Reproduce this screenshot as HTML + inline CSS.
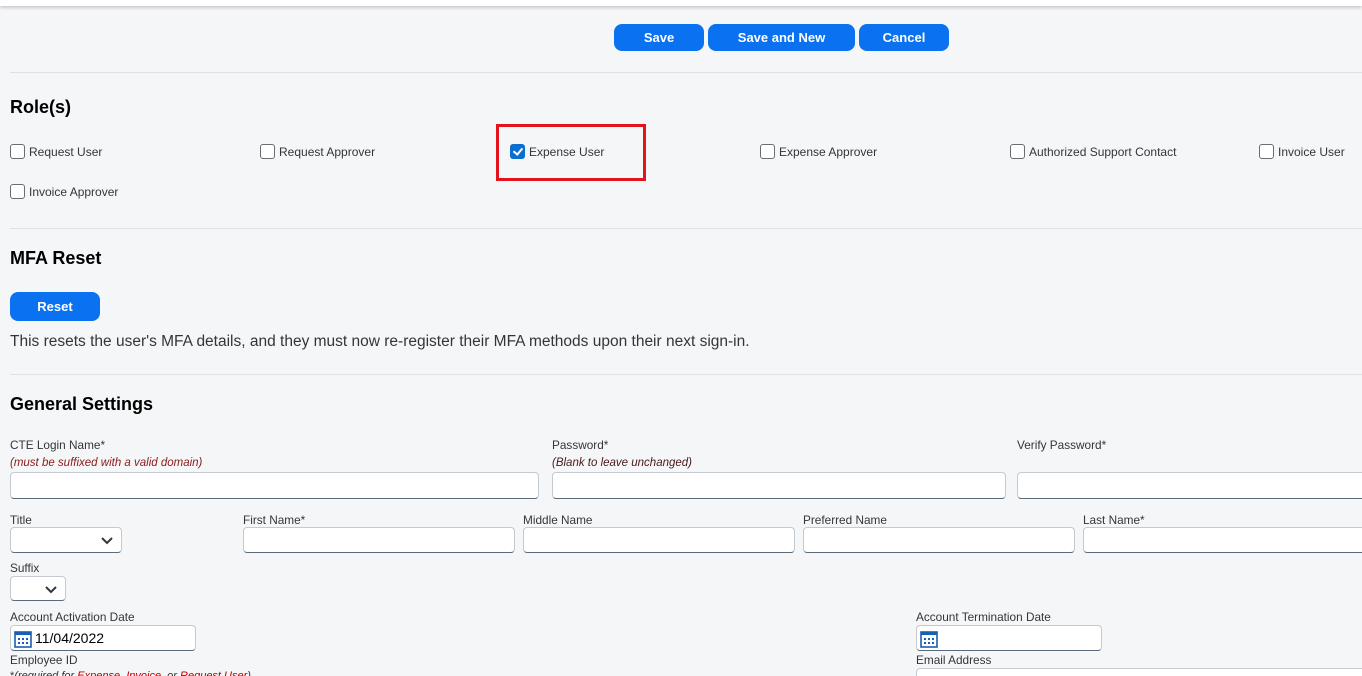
<!DOCTYPE html>
<html><head><meta charset="utf-8">
<style>
*{box-sizing:border-box;margin:0;padding:0}
html,body{width:1362px;height:676px;overflow:hidden}
body{background:#f5f6f7;font-family:"Liberation Sans",Arial,sans-serif;color:#32363a;position:relative}
.a{position:absolute}
.topbar{left:0;top:0;width:1362px;height:6px;background:#fff;box-shadow:0 2px 3px rgba(0,0,0,.18)}
.btn{position:absolute;background:#0a72f0;color:#fff;font-weight:bold;font-size:13px;border-radius:8px;text-align:center;line-height:27px;height:27px}
.hr{position:absolute;left:10px;width:1352px;height:1px;background:#dfe2e5}
h2{position:absolute;font-size:18px;font-weight:bold;color:#000;left:10px}
.cb{position:absolute;font-size:12px;color:#32363a;padding-left:19px;line-height:14px}
.cb:before{content:"";position:absolute;left:0;top:-1px;width:13px;height:13px;border:1px solid #6a6d70;border-radius:3px;background:#fff}
.cb.on:before{background:#0a6ed1;border-color:#0a6ed1}
.cb.on:after{content:"";position:absolute;left:4.5px;top:1px;width:4px;height:7px;border:solid #fff;border-width:0 2px 2px 0;transform:rotate(40deg)}
.lb{position:absolute;font-size:11.8px;color:#32363a}
.hint{position:absolute;font-size:11.5px;font-style:italic;color:#8b1a1a}
.in{position:absolute;background:#fff;border:1px solid #c5cad0;border-bottom-color:#5a6b7d;border-radius:4px;height:27px}
.sel svg{position:absolute;right:8px;top:9px}
.cal{position:absolute;left:3px;top:4px}
</style></head><body>
<div class="a topbar"></div>
<div class="btn" style="left:614px;top:24px;width:90px">Save</div>
<div class="btn" style="left:708px;top:24px;width:147px">Save and New</div>
<div class="btn" style="left:859px;top:24px;width:90px">Cancel</div>
<div class="hr" style="top:72px"></div>
<h2 style="top:97px">Role(s)</h2>
<div class="cb" style="left:10px;top:145px">Request User</div>
<div class="cb" style="left:260px;top:145px">Request Approver</div>
<div class="cb on" style="left:510px;top:145px">Expense User</div>
<div class="cb" style="left:760px;top:145px">Expense Approver</div>
<div class="cb" style="left:1010px;top:145px">Authorized Support Contact</div>
<div class="cb" style="left:1259px;top:145px">Invoice User</div>
<div class="cb" style="left:10px;top:185px">Invoice Approver</div>
<div class="a" style="left:496px;top:124px;width:150px;height:57px;border:3px solid #e3121c"></div>
<div class="hr" style="top:228px"></div>
<h2 style="top:248px">MFA Reset</h2>
<div class="btn" style="left:10px;top:292px;width:90px;height:29px;line-height:29px">Reset</div>
<div class="a" style="left:10px;top:333px;font-size:15.5px;color:#32363a">This resets the user's MFA details, and they must now re-register their MFA methods upon their next sign-in.</div>
<div class="hr" style="top:374px"></div>
<h2 style="top:394px">General Settings</h2>
<div class="lb" style="left:10px;top:438px">CTE Login Name*</div>
<div class="hint" style="left:10px;top:457px">(must be suffixed with a valid domain)</div>
<div class="in" style="left:10px;top:472px;width:529px"></div>
<div class="lb" style="left:552px;top:438px">Password*</div>
<div class="hint" style="left:552px;top:457px;color:#4a1a1a">(Blank to leave unchanged)</div>
<div class="in" style="left:552px;top:472px;width:454px"></div>
<div class="lb" style="left:1017px;top:438px">Verify Password*</div>
<div class="in" style="left:1017px;top:472px;width:360px"></div>
<div class="lb" style="left:10px;top:513px">Title</div>
<div class="in sel" style="left:10px;top:527px;width:112px;height:26px"><svg width="12" height="8" viewBox="0 0 12 8"><path d="M1 1l5 5 5-5" stroke="#32363a" stroke-width="2" fill="none"/></svg></div>
<div class="lb" style="left:243px;top:513px">First Name*</div>
<div class="in" style="left:243px;top:527px;width:272px;height:26px"></div>
<div class="lb" style="left:523px;top:513px">Middle Name</div>
<div class="in" style="left:523px;top:527px;width:272px;height:26px"></div>
<div class="lb" style="left:803px;top:513px">Preferred Name</div>
<div class="in" style="left:803px;top:527px;width:272px;height:26px"></div>
<div class="lb" style="left:1083px;top:513px">Last Name*</div>
<div class="in" style="left:1083px;top:527px;width:290px;height:26px"></div>
<div class="lb" style="left:10px;top:561px">Suffix</div>
<div class="in sel" style="left:10px;top:576px;width:56px;height:25px"><svg width="12" height="8" viewBox="0 0 12 8"><path d="M1 1l5 5 5-5" stroke="#32363a" stroke-width="2" fill="none"/></svg></div>
<div class="lb" style="left:10px;top:610px">Account Activation Date</div>
<div class="in" style="left:10px;top:625px;width:186px;height:26px"><svg class="cal" width="18" height="18" viewBox="0 0 18 18"><rect x="1" y="2" width="16" height="15" fill="#fff" stroke="#1b5fb5" stroke-width="1.6"/><rect x="1" y="2" width="16" height="3" fill="#1b5fb5"/><g fill="#1b5fb5"><rect x="4" y="8" width="2" height="2"/><rect x="8" y="8" width="2" height="2"/><rect x="12" y="8" width="2" height="2"/><rect x="4" y="12" width="2" height="2"/><rect x="8" y="12" width="2" height="2"/><rect x="12" y="12" width="2" height="2"/></g></svg><span style="position:absolute;left:24px;top:4px;font-size:14px;color:#000">11/04/2022</span></div>
<div class="lb" style="left:916px;top:610px">Account Termination Date</div>
<div class="in" style="left:916px;top:625px;width:186px;height:26px"><svg class="cal" width="18" height="18" viewBox="0 0 18 18"><rect x="1" y="2" width="16" height="15" fill="#fff" stroke="#1b5fb5" stroke-width="1.6"/><rect x="1" y="2" width="16" height="3" fill="#1b5fb5"/><g fill="#1b5fb5"><rect x="4" y="8" width="2" height="2"/><rect x="8" y="8" width="2" height="2"/><rect x="12" y="8" width="2" height="2"/><rect x="4" y="12" width="2" height="2"/><rect x="8" y="12" width="2" height="2"/><rect x="12" y="12" width="2" height="2"/></g></svg></div>
<div class="lb" style="left:10px;top:653px">Employee ID</div>
<div class="lb" style="left:916px;top:653px">Email Address</div>
<div class="in" style="left:916px;top:668px;width:460px"></div>
<div class="a" style="left:10px;top:670px;font-size:11px;color:#32363a">*<span style="font-style:italic">(required for <span style="color:#b00">Expense</span>, <span style="color:#b00">Invoice</span>, or <span style="color:#b00">Request User</span>)</span></div>
</body></html>
